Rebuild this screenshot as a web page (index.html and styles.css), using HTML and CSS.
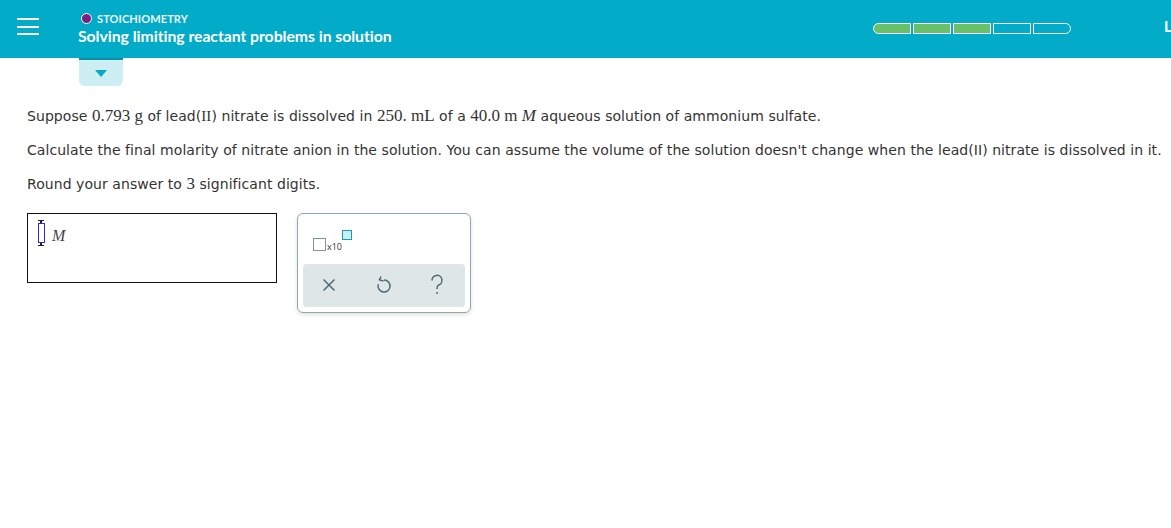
FILE: index.html
```html
<!DOCTYPE html>
<html>
<head>
<meta charset="utf-8">
<link rel="stylesheet" href="styles.css">
</head>
<body>
<header class="topbar">
  <div class="menu">
    <span></span><span></span><span></span>
  </div>
  <div class="titles">
    <div class="topic"><span class="dot"></span>STOICHIOMETRY</div>
    <div class="title">Solving limiting reactant problems in solution</div>
  </div>
  <div class="progress">
    <span class="seg done first"></span>
    <span class="seg done"></span>
    <span class="seg done"></span>
    <span class="seg"></span>
    <span class="seg last"></span>
  </div>
  <div class="user">L</div>
</header>
<div class="tabrow">
  <div class="tab"><span class="tri"></span></div>
</div>
<main class="content">
  <p class="line">Suppose <span class="m">0.793 g</span> of lead(<span class="m2">II</span>) nitrate is dissolved in <span class="m">250. mL</span> of a <span class="m">40.0 m <i>M</i></span> aqueous solution of ammonium sulfate.</p>
  <p class="line">Calculate the final molarity of nitrate anion in the solution. You can assume the volume of the solution doesn't change when the lead(II) nitrate is dissolved in it.</p>
  <p class="line">Round your answer to <span class="m">3</span> significant digits.</p>
  <div class="answer-row">
    <div class="answer">
      <span class="cursor"><span class="tick top"></span><span class="tick bottom"></span></span><i class="unit">M</i>
    </div>
    <div class="tools">
      <div class="sci">
        <span class="base"></span><span class="x10">x10</span><span class="exp"></span>
      </div>
      <div class="buttons">
        <svg class="ico" width="16" height="16" viewBox="0 0 16 16"><path d="M2.5 2.5 L13.5 13.5 M13.5 2.5 L2.5 13.5" stroke="#4a6a77" stroke-width="1.5" fill="none"/></svg>
        <svg class="ico" width="16" height="20" viewBox="0 0 16 20"><path d="M8 5 A6 6 0 1 1 2.3 9.3" stroke="#4a6a77" stroke-width="1.5" fill="none"/><path d="M5 1.5 L3.3 4.8 L7.5 6" stroke="#4a6a77" stroke-width="1.5" fill="none" stroke-linejoin="round"/></svg>
        <svg class="ico" width="14" height="22" viewBox="0 0 14 22"><path d="M2 6.5 A5 5 0 1 1 8.3 11.2 C7.1 11.8 7 12.7 7 15" stroke="#4a6a77" stroke-width="1.5" fill="none"/><circle cx="7" cy="19" r="1" fill="#4a6a77"/></svg>
      </div>
    </div>
  </div>
</main>
</body>
</html>
```
FILE: styles.css
```css
* { box-sizing: border-box; }
html, body { margin: 0; padding: 0; background: #fff; }
body { width: 1171px; height: 528px; overflow: hidden; font-family: "DejaVu Sans", sans-serif; }

.topbar {
  height: 58px;
  background: #02abc8;
  display: flex;
  align-items: flex-start;
  position: relative;
}
.menu {
  width: 78px;
  padding: 18px 0 0 17px;
  display: flex;
  flex-direction: column;
  gap: 5.5px;
}
.menu span { display: block; width: 22px; height: 2px; background: #fff; }
.titles { padding-top: 10px; color: #fff; font-family: Lato, "Open Sans", sans-serif; }
.topic {
  display: flex; align-items: center;
  font-size: 11px; font-weight: 700; letter-spacing: 0.1px;
  height: 16px; margin-left: 3px; color: #eaf8fb;
}
.dot {
  width: 11px; height: 11px; border-radius: 50%;
  background: #7a1f86; border: 1.5px solid #fff;
  margin-right: 5px;
}
.title { font-size: 15.8px; font-weight: 700; margin-top: 0; letter-spacing: -0.05px; }
.progress {
  margin-left: auto;
  margin-top: 23px;
  display: flex; gap: 2px;
  margin-right: 100px;
}
.seg {
  width: 38px; height: 11px;
  border: 1.5px solid #fff;
  background: transparent;
}
.seg.done { background: #6abf69; }
.seg.first { border-radius: 6px 0 0 6px; }
.seg.last { border-radius: 0 6px 6px 0; }
.user {
  position: absolute; left: 1164px; top: 17px;
  color: #fff; font-family: Lato, sans-serif; font-weight: 700; font-size: 15px;
}
.tabrow { padding-left: 79px; height: 28px; }
.tab {
  width: 44px; height: 28px;
  background: #cdeef3;
  border-top: 2px solid #0a8ea6;
  border-radius: 0 0 6px 6px;
  display: flex; justify-content: center; padding-top: 10px;
}
.tri {
  width: 0; height: 0;
  border-left: 6px solid transparent;
  border-right: 6px solid transparent;
  border-top: 7px solid #02abc8;
}
.content { padding: 20px 0 0 27px; color: #333; font-size: 14px; letter-spacing: 0.06px; }
.line { margin: 0 0 14px 0; height: 20px; line-height: 20px; white-space: nowrap; }
.m { font-family: "Liberation Serif", serif; font-size: 17px; letter-spacing: 0; }
.m2 { font-family: "Liberation Serif", serif; font-size: 15px; }
.m i { font-style: italic; }
.answer-row { display: flex; gap: 20px; margin-top: 19px; }
.answer {
  width: 250px; height: 70px;
  border: 1.5px solid #111;
  padding: 8px 0 0 10px;
  display: flex; align-items: flex-start;
}
.cursor {
  width: 7px; height: 20px; margin-top: 1px;
  border: 1.5px solid #2a2ae6;
  position: relative;
}
.tick {
  position: absolute; left: 1px; width: 2px; height: 3px;
  background: #222;
}
.tick::before {
  content: ""; position: absolute; left: -2px; width: 6px; height: 1px; background: #222;
}
.tick.top { top: -4px; }
.tick.top::before { top: 0; }
.tick.bottom { bottom: -4px; }
.tick.bottom::before { bottom: 0; }
.unit { font-family: "Liberation Serif", serif; font-size: 16px; color: #444; margin-left: 7px; margin-top: 5px; }
.tools {
  width: 174px; height: 100px;
  border: 1px solid #8ea6ae;
  border-radius: 6px;
  box-shadow: 0 2px 4px rgba(0,0,0,0.12);
  padding: 16px 5px 5px 5px;
  display: flex; flex-direction: column;
}
.sci { display: flex; align-items: flex-end; height: 21px; padding-left: 10px; position: relative; }
.base { width: 13px; height: 13px; border: 1.5px solid #80959c; }
.x10 { font-family: "Open Sans", sans-serif; font-size: 9px; color: #333; line-height: 9px; margin-left: 1px; letter-spacing: 0; }
.exp {
  width: 10px; height: 10px; border: 1.5px solid #1a9cb4; background: #c8eef4;
  align-self: flex-start; margin-left: 0;
}
.buttons {
  margin-top: 13px;
  height: 44px;
  background: #dfe6e8;
  border-radius: 4px;
  display: flex; align-items: center; justify-content: space-between;
  padding: 0 21px 0 18px;
}
```
